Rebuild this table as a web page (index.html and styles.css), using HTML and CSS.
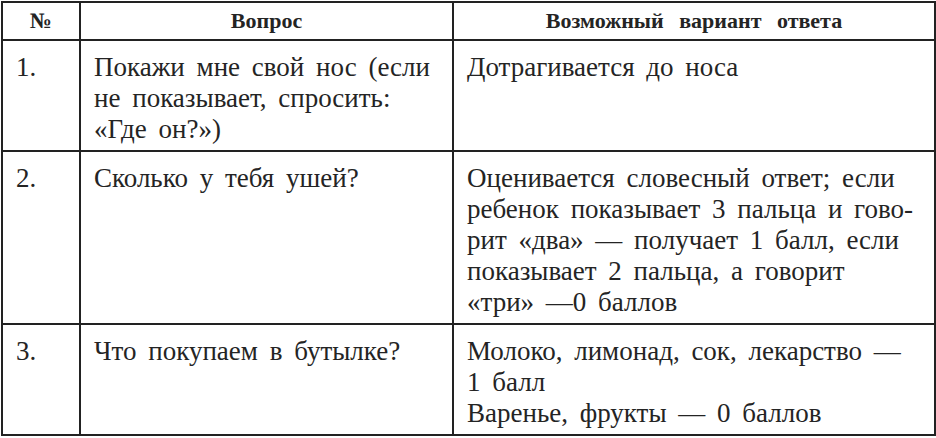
FILE: index.html
```html
<!DOCTYPE html>
<html lang="ru">
<head>
<meta charset="utf-8">
<link rel="stylesheet" href="styles.css">
</head>
<body>
<table class="qa">
  <colgroup>
    <col class="c-num">
    <col class="c-q">
    <col class="c-a">
  </colgroup>
  <thead>
    <tr>
      <th>№</th>
      <th>Вопрос</th>
      <th>Возможный вариант ответа</th>
    </tr>
  </thead>
  <tbody>
    <tr>
      <td>1.</td>
      <td>Покажи мне свой нос (если<br>не показывает, спросить:<br>«Где он?»)</td>
      <td>Дотрагивается до носа</td>
    </tr>
    <tr>
      <td>2.</td>
      <td>Сколько у тебя ушей?</td>
      <td>Оценивается словесный ответ; если<br>ребенок показывает 3 пальца и гово-<br>рит «два» — получает 1 балл, если<br>показывает 2 пальца, а говорит<br>«три» —0 баллов</td>
    </tr>
    <tr>
      <td>3.</td>
      <td>Что покупаем в бутылке?</td>
      <td>Молоко, лимонад, сок, лекарство —<br>1 балл<br>Варенье, фрукты — 0 баллов</td>
    </tr>
  </tbody>
</table>
</body>
</html>
```

FILE: styles.css
```css
html, body {
  margin: 0;
  padding: 0;
  background: #ffffff;
}

body {
  padding: 1px 0 0 1px;
  font-family: "Liberation Serif", "DejaVu Serif", serif;
}

.qa {
  border-collapse: collapse;
  width: 933px;
  table-layout: fixed;
  color: #242424;
}

.c-num { width: 78px; }
.c-q { width: 373px; }
.c-a { width: 482px; }

.qa th,
.qa td {
  font-family: "Liberation Serif", "DejaVu Serif", serif;
  border: 2px solid #222;
  white-space: nowrap;
}

.qa th {
  height: 36px;
  padding: 0;
  font-size: 22px;
  font-weight: bold;
  word-spacing: 10px;
  text-align: center;
  vertical-align: middle;
}

.qa td {
  font-size: 27px;
  line-height: 31px;
  word-spacing: 5px;
  padding: 11px 10px 5px 13px;
  vertical-align: top;
  text-align: left;
}
```
